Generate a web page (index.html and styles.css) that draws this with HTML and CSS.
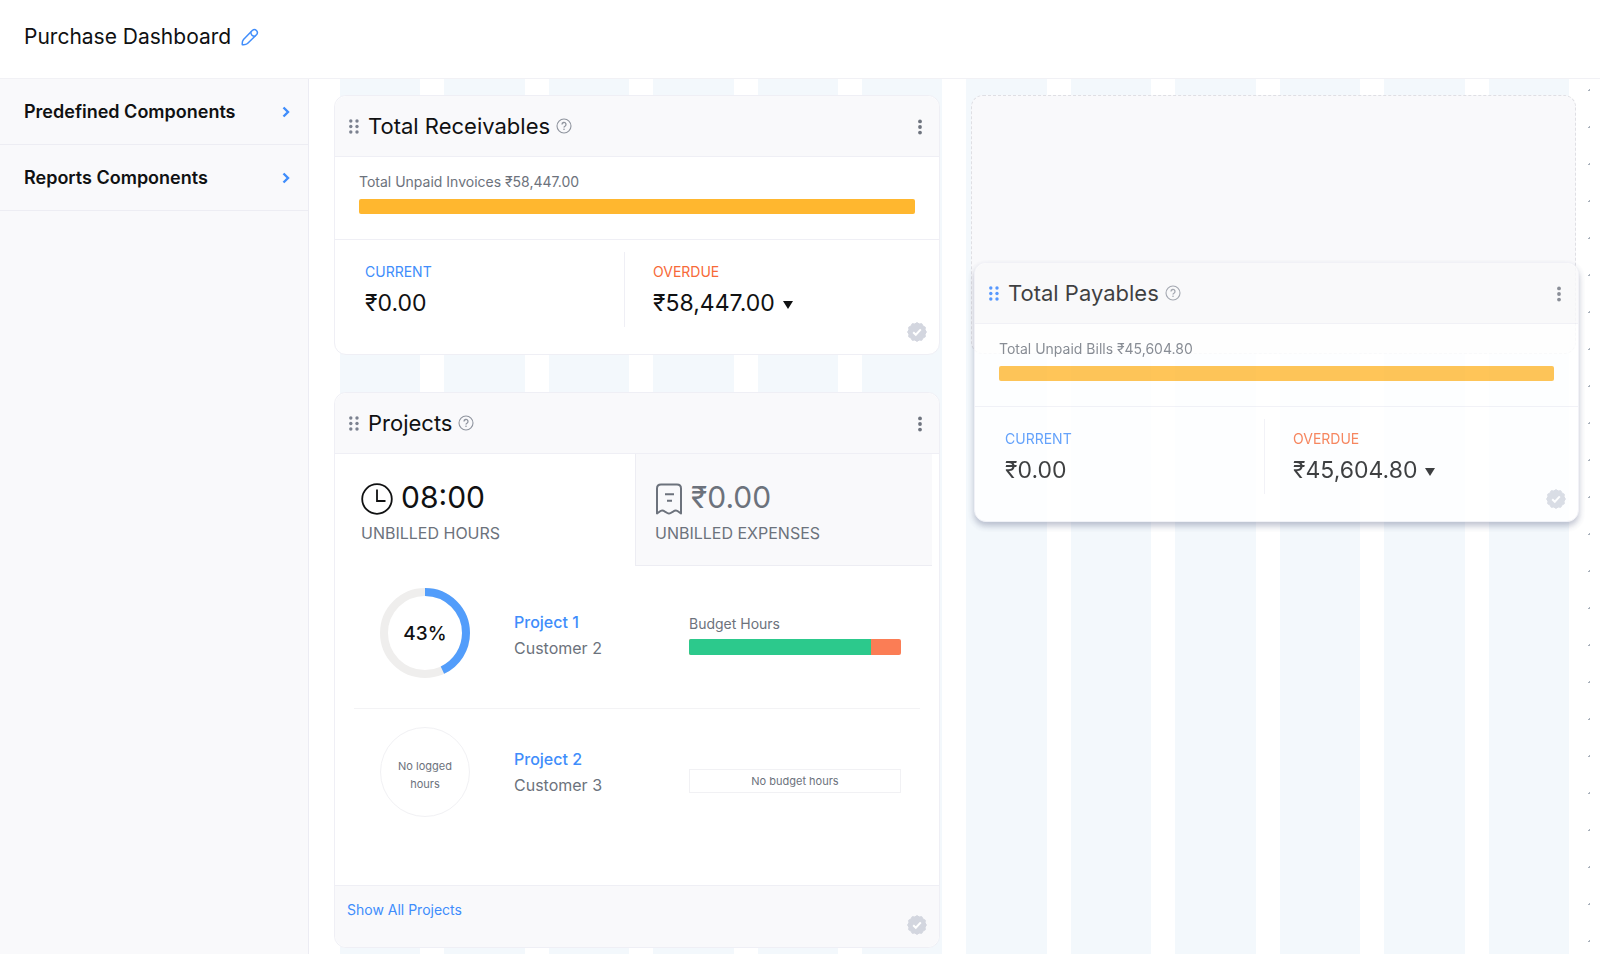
FILE: index.html
```html
<!DOCTYPE html>
<html lang="en">
<head>
<meta charset="utf-8">
<title>Purchase Dashboard</title>
<link rel="stylesheet" href="styles.css">
</head>
<body>
<svg class="defs" aria-hidden="true">
  <symbol id="grip" viewBox="0 0 10 15">
    <circle cx="1.8" cy="2" r="1.7"/><circle cx="8" cy="2" r="1.7"/>
    <circle cx="1.8" cy="7.5" r="1.7"/><circle cx="8" cy="7.5" r="1.7"/>
    <circle cx="1.8" cy="13" r="1.7"/><circle cx="8" cy="13" r="1.7"/>
  </symbol>
  <symbol id="help" viewBox="0 0 16 16">
    <circle cx="8" cy="8" r="7" fill="none" stroke="currentColor" stroke-width="1.1"/>
    <path d="M6 6.500a2 2 0 1 1 3 1.700c-.7.4-1 .7-1 1.400" fill="none" stroke="currentColor" stroke-width="1.300"/>
    <circle cx="8" cy="11.300" r=".8" fill="currentColor"/>
  </symbol>
  <symbol id="kebab" viewBox="0 0 4 16">
    <circle cx="2" cy="2.400" r="1.900"/><circle cx="2" cy="8" r="1.900"/><circle cx="2" cy="13.600" r="1.900"/>
  </symbol>
  <symbol id="verified" viewBox="0 0 20 20">
    <path d="M10 .6l2.200 1.300 2.600-.2 1.200 2.300 2.300 1.200-.2 2.600L19.400 10l-1.300 2.200.2 2.600-2.300 1.200-1.200 2.300-2.600-.2L10 19.400l-2.200-1.300-2.600.2L4 16l-2.300-1.200.2-2.600L.6 10l1.300-2.200-.2-2.600L4 4l1.200-2.300 2.600.2z" fill="currentColor" stroke="currentColor" stroke-linejoin="round"/>
    <path d="M6.200 10.300l2.600 2.500 5-5.400" fill="none" stroke="#fff" stroke-width="2"/>
  </symbol>
  <symbol id="chevron" viewBox="0 0 8 12">
    <path d="M1.500 1.500L6 6l-4.500 4.500" fill="none" stroke="currentColor" stroke-width="2.400"/>
  </symbol>
</svg>

<header class="topbar">
  <h1 class="page-title">Purchase Dashboard</h1>
  <button class="icon-button edit" aria-label="Edit name">
    <svg width="18" height="18" viewBox="0 0 18 18" fill="none" stroke="currentColor" stroke-width="1.500" stroke-linecap="round" stroke-linejoin="round">
      <path d="M1.300 16.700q-.4-3.400 1.200-5.200L11.500 2.300a3 3 0 0 1 4.200 4.200L6.500 15.500q-1.800 1.600-5.200 1.200z"/>
      <path d="M9.800 4.200q.3 4 4 4"/>
    </svg>
  </button>
</header>

<div class="workspace">
  <nav class="sidebar">
    <button class="side-item">Predefined Components<svg width="8" height="12"><use href="#chevron"/></svg></button>
    <button class="side-item">Reports Components<svg width="8" height="12"><use href="#chevron"/></svg></button>
  </nav>

  <main class="canvas">
    <div class="guides" aria-hidden="true">
      <span></span><span></span><span></span><span></span><span></span><span></span>
      <span></span><span></span><span></span><span></span><span></span><span></span>
    </div>

    <div class="board">
      <section class="card receivables">
        <header class="card-head">
          <svg class="grip" width="10" height="15"><use href="#grip"/></svg>
          <h2 class="card-title">Total Receivables</h2>
          <svg class="help" width="16" height="16"><use href="#help"/></svg>
          <button class="icon-button menu" aria-label="More options"><svg width="4" height="16"><use href="#kebab"/></svg></button>
        </header>
        <div class="summary">
          <p class="summary-label">Total Unpaid Invoices ₹58,447.00</p>
          <div class="summary-bar"></div>
        </div>
        <div class="amounts">
          <div class="amount">
            <p class="amount-label current">CURRENT</p>
            <p class="amount-value">₹0.00</p>
          </div>
          <div class="amount">
            <p class="amount-label overdue">OVERDUE</p>
            <button class="amount-value">₹58,447.00<span class="caret"></span></button>
          </div>
        </div>
        <svg class="verified" width="20" height="20"><use href="#verified"/></svg>
      </section>

      <div class="drop-slot">
        <section class="card payables">
          <header class="card-head">
            <svg class="grip" width="10" height="15"><use href="#grip"/></svg>
            <h2 class="card-title">Total Payables</h2>
            <svg class="help" width="16" height="16"><use href="#help"/></svg>
            <button class="icon-button menu" aria-label="More options"><svg width="4" height="16"><use href="#kebab"/></svg></button>
          </header>
          <div class="summary">
            <p class="summary-label">Total Unpaid Bills ₹45,604.80</p>
            <div class="summary-bar"></div>
          </div>
          <div class="amounts">
            <div class="amount">
              <p class="amount-label current">CURRENT</p>
              <p class="amount-value">₹0.00</p>
            </div>
            <div class="amount">
              <p class="amount-label overdue">OVERDUE</p>
              <button class="amount-value">₹45,604.80<span class="caret"></span></button>
            </div>
          </div>
          <svg class="verified" width="20" height="20"><use href="#verified"/></svg>
        </section>
      </div>

      <section class="card projects">
        <header class="card-head">
          <svg class="grip" width="10" height="15"><use href="#grip"/></svg>
          <h2 class="card-title">Projects</h2>
          <svg class="help" width="16" height="16"><use href="#help"/></svg>
          <button class="icon-button menu" aria-label="More options"><svg width="4" height="16"><use href="#kebab"/></svg></button>
        </header>
        <div class="tabs">
          <button class="tab active">
            <span class="tab-value">
              <svg width="32" height="32" viewBox="0 0 32 32" fill="none" stroke="currentColor" stroke-width="1.800">
                <circle cx="16" cy="16" r="14.800"/><path d="M16 6.500V18h8.500"/>
              </svg>08:00</span>
            <span class="tab-label">UNBILLED HOURS</span>
          </button>
          <button class="tab">
            <span class="tab-value">
              <svg width="28" height="32" viewBox="0 0 28 32" fill="none" stroke="currentColor" stroke-width="2">
                <path d="M2 30.500V5.500q0-4 4-4h16q4 0 4 4v25l-3.500-2.500q-2-1.200-4 .3l-2.800 1.700q-1.700 1-3.400 0L9.500 28.300q-2-1.500-4-.3z" stroke-linejoin="round"/>
                <path d="M10 11.300h9M12 17.800h5"/>
              </svg>₹0.00</span>
            <span class="tab-label">UNBILLED EXPENSES</span>
          </button>
        </div>
        <ul class="project-list">
          <li class="project">
            <div class="progress">
              <svg width="90" height="90" viewBox="0 0 90 90" fill="none" stroke-width="8">
                <circle cx="45" cy="45" r="41" stroke="#efeeed"/>
                <circle cx="45" cy="45" r="41" stroke="#529dfb" pathLength="100" stroke-dasharray="43 57" transform="rotate(-90 45 45)"/>
              </svg>
              <span class="percent">43%</span>
            </div>
            <div class="project-name"><a href="#">Project 1</a><span>Customer 2</span></div>
            <div class="budget">
              <span class="budget-label">Budget Hours</span>
              <div class="budget-bar"><div class="budget-used" style="width:86%"></div></div>
            </div>
          </li>
          <li class="project">
            <div class="progress empty">No logged hours</div>
            <div class="project-name"><a href="#">Project 2</a><span>Customer 3</span></div>
            <div class="budget none">No budget hours</div>
          </li>
        </ul>
        <footer class="card-foot"><a href="#">Show All Projects</a></footer>
        <svg class="verified" width="20" height="20"><use href="#verified"/></svg>
      </section>
    </div>
  </main>
</div>
</body>
</html>
```
FILE: styles.css
```css
* { box-sizing: border-box; }

body {
  margin: 0;
  min-height: 100vh;
  display: flex;
  flex-direction: column;
  background: #fff;
  color: #101112;
  font-family: Inter, "Liberation Sans", sans-serif;
}

h1, h2, p, ul { margin: 0; padding: 0; font-weight: 400; }
ul { list-style: none; }
svg { display: block; flex: none; }
a { color: #408dfb; text-decoration: none; }

button {
  margin: 0;
  padding: 0;
  border: 0;
  background: none;
  color: inherit;
  font: inherit;
  text-align: left;
  cursor: pointer;
}

.defs { display: none; }

.topbar {
  display: flex;
  align-items: center;
  gap: 10px;
  height: 79px;
  padding: 0 24px 5px;
  border-bottom: 1px solid #f1f1f5;
}
.page-title { font-size: 21px; line-height: 28px; }
.edit { color: #408dfb; }

.workspace { flex: 1; display: flex; }

.sidebar {
  flex: 0 0 309px;
  background: #f9f9fb;
  border-right: 1px solid #ececf3;
}
.side-item {
  display: flex;
  align-items: center;
  justify-content: space-between;
  width: 100%;
  height: 66px;
  padding: 0 18px 0 24px;
  border-bottom: 1px solid #ededf3;
  font-size: 18px;
  font-weight: 600;
}
.side-item svg { color: #408dfb; }

/* The guides and the board share one grid cell. */
.canvas {
  flex: 1;
  min-width: 0;
  display: grid;
  background: radial-gradient(circle, #aab2bc 1px, transparent 1px) right 9px top -7px / 3px 37px repeat-y;
}
.guides, .board { grid-area: 1 / 1; }
.guides {
  display: grid;
  grid-template-columns: repeat(12, 1fr);
  gap: 24px;
  padding: 0 31px;
}
.guides span { background: #f3f8fc; }

.board {
  display: grid;
  grid-template-columns: 1fr 1fr;
  align-content: start;
  align-items: start;
  gap: 37px 31px;
  padding: 16px 24px 6px 25px;
}

.card {
  position: relative;
  background: #fff;
  border: 1px solid #efeff5;
  border-radius: 12px;
}
.card-head {
  display: flex;
  align-items: center;
  height: 61px;
  padding: 0 17px 0 14px;
  background: #f9f9fb;
  border-bottom: 1px solid #efeff5;
  border-radius: 12px 12px 0 0;
}
.card-title { margin: 0 6px 0 9px; font-size: 22px; line-height: 28px; }
.grip { fill: #7c8290; }
.help { color: #8f949e; }
.menu { margin: 2px 0 0 auto; fill: #6f747f; }
.verified { position: absolute; right: 12px; bottom: 12px; color: #d3d6df; }

.summary { padding: 15px 24px 25px; border-bottom: 1px solid #efeff5; }
.summary-label { margin-bottom: 7px; font-size: 14px; line-height: 20px; color: #6c727c; }
.summary-bar { height: 15px; border-radius: 2px; background: #ffb72f; }

.amounts { display: flex; padding: 12px 0 27px 30px; }
.amount { flex: 0 0 259px; height: 75px; padding-top: 10px; }
.amount + .amount { flex: 1; padding-left: 28px; border-left: 1px solid #efeff5; }
.amount-label { font-size: 14px; line-height: 20px; }
.current { color: #408dfb; }
.overdue { color: #f76a38; }
.amount-value { display: flex; align-items: center; margin-top: 6px; font-size: 23px; line-height: 30px; }
.caret {
  margin: 4px 0 0 8px;
  border: 5px solid transparent;
  border-top: 8px solid currentColor;
  border-bottom: 0;
}

.drop-slot {
  position: relative;
  height: 259px;
  background: #f9f9fb;
  border: 1px dashed #dfdfe4;
  border-radius: 12px;
}
.payables {
  position: absolute;
  top: 166px;
  left: 2px;
  width: calc(100% + 2px);
  opacity: .8;
  box-shadow: 0 4px 6px rgba(60, 70, 110, .4);
}
.payables .grip { fill: #2f80ff; }

.tabs { display: grid; grid-template-columns: 300px 1fr; padding-right: 7px; }
.tab {
  display: flex;
  flex-direction: column;
  height: 112px;
  padding: 25px 0 0 19px;
  background: #f9f9fb;
  border: solid #ededf3;
  border-width: 0 0 1px 1px;
  color: #6c727c;
}
.tab.active { padding-left: 26px; background: none; border: 0; color: #101112; }
.tab-value { display: flex; align-items: center; gap: 8px; font-size: 30px; line-height: 36px; }
.tab-value svg { margin-top: 4px; }
.tab-label { margin-top: 6px; font-size: 16px; line-height: 24px; color: #6c727c; }

.project-list { min-height: 319px; padding: 0 19px; }
.project {
  display: grid;
  grid-template-columns: 90px 131px 1fr;
  column-gap: 44px;
  align-items: center;
  padding: 22px 19px 30px 26px;
}
.project + .project { padding-top: 18px; border-top: 1px solid #f3f3f5; }
.progress { display: grid; place-items: center; width: 90px; height: 90px; }
.progress > * { grid-area: 1 / 1; }
.percent { font-size: 19px; font-weight: 500; }
.empty {
  padding: 6px 14px 0;
  border: 1px solid #f1f1f4;
  border-radius: 50%;
  font-size: 11px;
  line-height: 18px;
  text-align: center;
  color: #6c727c;
}
.project-name {
  display: flex;
  flex-direction: column;
  gap: 2px;
  margin-top: 4px;
  font-size: 16px;
  line-height: 24px;
  color: #6c727c;
}
.project-name a { font-weight: 500; }
.project + .project .project-name { margin-top: 0; }
.budget { width: 212px; margin-top: 3px; }
.budget-label { display: block; margin-bottom: 5px; font-size: 14px; line-height: 20px; color: #6c727c; }
.budget-bar { height: 16px; border-radius: 2px; background: #fb7d55; overflow: hidden; }
.budget-used { height: 100%; background: #2cc98c; }
.none {
  margin-top: 18px;
  border: 1px solid #f1f1f4;
  font-size: 11px;
  line-height: 22px;
  text-align: center;
  color: #6c727c;
}

.card-foot {
  height: 62px;
  padding: 14px 12px;
  background: #f9f9fb;
  border-top: 1px solid #efeff5;
  border-radius: 0 0 12px 12px;
  font-size: 14px;
  line-height: 20px;
}
```
